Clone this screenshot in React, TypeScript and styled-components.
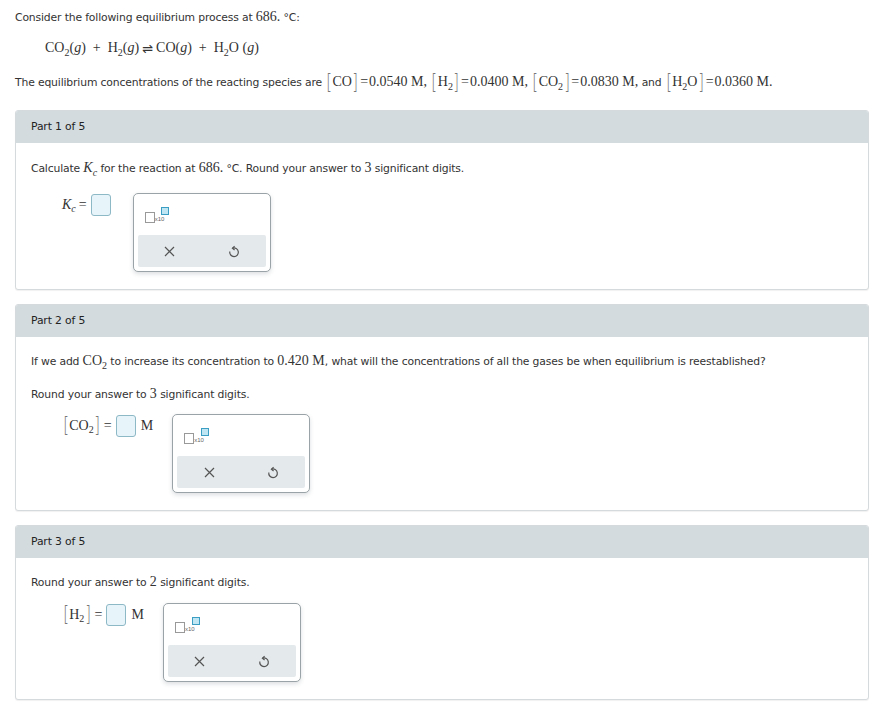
import React from "react";
import styled, { createGlobalStyle } from "styled-components";

const Global = createGlobalStyle`
  html, body { margin: 0; padding: 0; background: #ffffff; }
  body { font-family: "DejaVu Sans", Verdana, sans-serif; font-size: 10.8px; letter-spacing: -0.15px; color: #333; }
`;

const Page = styled.div`
  padding: 8px 7px 10px 15px;
`;

const Line = styled.div<{ $indent?: number; $h?: number }>`
  height: ${(p) => p.$h ?? 18}px;
  display: flex;
  align-items: center;
  padding-left: ${(p) => p.$indent ?? 0}px;
  white-space: nowrap;
`;

const Math = styled.span`
  font-family: "Liberation Serif", "Times New Roman", serif;
  font-size: 14px;
  letter-spacing: 0;
  color: #333;
  display: inline-flex;
  align-items: center;
  white-space: nowrap;
`;

const Sub = styled.span`
  font-size: 10px;
  position: relative;
  top: 4px;
`;

const It = styled.i`
  font-style: italic;
`;

const Bracket = styled.span`
  font-family: "DejaVu Sans", sans-serif;
  font-weight: 200;
  font-size: 21px;
  color: #777;
  line-height: 1;
  display: inline-block;
  transform: scaleX(0.7) scaleY(1.05);
  margin: 0 -0.5px;
`;

const Eq = styled.span<{ $tight?: boolean }>`
  margin: 0 ${(p) => (p.$tight ? 1 : 3)}px;
`;

const Unit = styled.span`
  margin-left: 2px;
`;

const Sans = styled.span`
  font-family: "DejaVu Sans", Verdana, sans-serif;
  font-size: 10.8px;
  letter-spacing: -0.15px;
`;

const Arrow = styled.span`
  font-family: "DejaVu Sans", sans-serif;
  font-size: 13px;
  margin: 0 3px;
`;

const Cards = styled.div`
  display: flex;
  flex-direction: column;
  gap: 14px;
  margin-top: 16px;
`;

const Card = styled.section`
  border: 1px solid #d5dadc;
  border-radius: 3px;
  box-shadow: 0 1px 1px rgba(0, 0, 0, 0.06);
  background: #fff;
  overflow: hidden;
`;

const CardHeader = styled.div`
  height: 32px;
  line-height: 32px;
  padding-left: 15px;
  background: #d3dbde;
  color: #222;
`;

const CardBody = styled.div<{ $pt?: number }>`
  padding: ${(p) => p.$pt ?? 15}px 15px 17px 15px;
  display: flex;
  flex-direction: column;
`;

const Para = styled.div<{ $mb?: number }>`
  height: 18px;
  display: flex;
  align-items: center;
  white-space: nowrap;
  margin-bottom: ${(p) => p.$mb ?? 13}px;
`;

const AnswerRow = styled.div`
  display: flex;
  align-items: flex-start;
  padding-left: 31px;
`;

const Label = styled.div`
  display: flex;
  align-items: center;
  height: 23px;
  margin-right: 19px;
`;

const InputBox = styled.span`
  display: inline-block;
  width: 18px;
  height: 20px;
  border: 1px solid #8db8c6;
  border-radius: 3px;
  background: #e7f4f9;
  margin: 0 3px 0 1px;
`;

const Palette = styled.div`
  width: 136px;
  height: 77px;
  border: 1px solid #9aa3a7;
  border-radius: 5px;
  box-shadow: 0 2px 4px rgba(60, 80, 90, 0.18);
  background: #fff;
  display: flex;
  flex-direction: column;
  box-sizing: content-box;
`;

const PaletteTop = styled.div`
  height: 41px;
  padding-left: 11px;
  display: flex;
  align-items: center;
`;

const SciIcon = styled.span`
  display: inline-flex;
  align-items: flex-end;
  height: 16px;
  padding-top: 1px;
`;

const SmallBox = styled.span`
  display: inline-block;
  width: 8px;
  height: 9px;
  border: 1px solid #999;
`;

const Tiny = styled.span`
  font-family: "Liberation Sans", Arial, sans-serif;
  font-size: 6px;
  letter-spacing: 0;
  color: #666;
  line-height: 7px;
`;

const SupBox = styled.span`
  align-self: flex-start;
  display: inline-block;
  width: 6px;
  height: 6px;
  border: 1px solid #3b9ec2;
  background: #bfe6f2;
  margin-left: -3px;
`;

const ButtonBar = styled.div`
  margin: 0 4px 4px 4px;
  height: 32px;
  background: #e4e9eb;
  border-radius: 2px;
  display: flex;
  align-items: center;
  justify-content: space-around;
`;

const IconBtn = styled.span`
  width: 14px;
  height: 14px;
  display: inline-flex;
  align-items: center;
  justify-content: center;
  color: #555;
`;

const XIcon = () => (
  <svg width="11" height="11" viewBox="0 0 11 11">
    <path d="M1 1 L10 10 M10 1 L1 10" stroke="#555" strokeWidth="1.2" fill="none" />
  </svg>
);

const UndoIcon = () => (
  <svg width="12" height="13" viewBox="0 0 12 13">
    <path d="M4.6 3.2 A4.3 4.3 0 1 1 1.8 6.5" stroke="#555" strokeWidth="1.2" fill="none" />
    <path d="M6.6 1.2 L4.4 3.2 L6.6 5" stroke="#555" strokeWidth="1.2" fill="none" />
  </svg>
);

const AnswerPalette = () => (
  <Palette>
    <PaletteTop>
      <SciIcon>
        <SmallBox />
        <Tiny>x10</Tiny>
        <SupBox />
      </SciIcon>
    </PaletteTop>
    <ButtonBar>
      <IconBtn>
        <XIcon />
      </IconBtn>
      <IconBtn>
        <UndoIcon />
      </IconBtn>
    </ButtonBar>
  </Palette>
);

const Kc = () => (
  <>
    <It>K</It>
    <Sub>
      <It>c</It>
    </Sub>
  </>
);

export default function App() {
  return (
    <>
      <Global />
      <Page>
        <Line>
          Consider the following equilibrium process at&nbsp;<Math>686.</Math>&nbsp;°C:
        </Line>
        <Line $indent={30} $h={44}>
          <Math>
            CO<Sub>2</Sub>(<It>g</It>)&nbsp;&nbsp;+&nbsp;&nbsp;H<Sub>2</Sub>(<It>g</It>)
            <Arrow>⇌</Arrow>CO(<It>g</It>)&nbsp;&nbsp;+&nbsp;&nbsp;H<Sub>2</Sub>O&nbsp;(<It>g</It>)
          </Math>
        </Line>
        <Line $h={24}>
          The equilibrium concentrations of the reacting species are&nbsp;
          <Math>
            <Bracket>[</Bracket>CO<Bracket>]</Bracket>
            <Eq $tight>=</Eq>0.0540 M,&nbsp;
            <Bracket>[</Bracket>H<Sub>2</Sub>
            <Bracket>]</Bracket>
            <Eq $tight>=</Eq>0.0400 M,&nbsp;
            <Bracket>[</Bracket>CO<Sub>2</Sub>
            <Bracket>]</Bracket>
            <Eq $tight>=</Eq>0.0830 M,&nbsp;<Sans>and</Sans>&nbsp;
            <Bracket>[</Bracket>H<Sub>2</Sub>O<Bracket>]</Bracket>
            <Eq $tight>=</Eq>0.0360 M.
          </Math>
        </Line>

        <Cards>
          <Card>
            <CardHeader>Part 1 of 5</CardHeader>
            <CardBody $pt={16}>
              <Para $mb={16}>
                Calculate&nbsp;
                <Math>
                  <Kc />
                </Math>
                &nbsp;for the reaction at&nbsp;<Math>686.</Math>&nbsp;°C. Round your answer to&nbsp;
                <Math>3</Math>&nbsp;significant digits.
              </Para>
              <AnswerRow>
                <Label>
                  <Math>
                    <Kc />
                    <Eq>=</Eq>
                  </Math>
                  <InputBox />
                </Label>
                <AnswerPalette />
              </AnswerRow>
            </CardBody>
          </Card>

          <Card>
            <CardHeader>Part 2 of 5</CardHeader>
            <CardBody>
              <Para $mb={15}>
                If we add&nbsp;
                <Math>
                  CO<Sub>2</Sub>
                </Math>
                &nbsp;to increase its concentration to&nbsp;<Math>0.420 M</Math>, what will the
                concentrations of all the gases be when equilibrium is reestablished?
              </Para>
              <Para $mb={11}>
                Round your answer to&nbsp;<Math>3</Math>&nbsp;significant digits.
              </Para>
              <AnswerRow>
                <Label>
                  <Math>
                    <Bracket>[</Bracket>CO<Sub>2</Sub>
                    <Bracket>]</Bracket>
                    <Eq>=</Eq>
                  </Math>
                  <InputBox />
                  <Math>
                    <Unit>M</Unit>
                  </Math>
                </Label>
                <AnswerPalette />
              </AnswerRow>
            </CardBody>
          </Card>

          <Card>
            <CardHeader>Part 3 of 5</CardHeader>
            <CardBody>
              <Para $mb={12}>
                Round your answer to&nbsp;<Math>2</Math>&nbsp;significant digits.
              </Para>
              <AnswerRow>
                <Label>
                  <Math>
                    <Bracket>[</Bracket>H<Sub>2</Sub>
                    <Bracket>]</Bracket>
                    <Eq>=</Eq>
                  </Math>
                  <InputBox />
                  <Math>
                    <Unit>M</Unit>
                  </Math>
                </Label>
                <AnswerPalette />
              </AnswerRow>
            </CardBody>
          </Card>
        </Cards>
      </Page>
    </>
  );
}
